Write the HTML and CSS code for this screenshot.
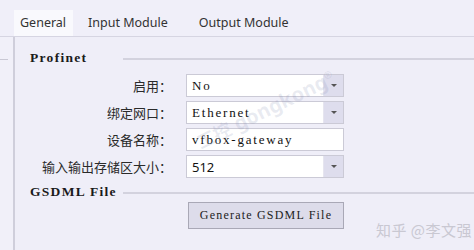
FILE: index.html
```html
<!DOCTYPE html>
<html>
<head>
<meta charset="utf-8">
<link rel="stylesheet" href="styles.css">
</head>
<body>
<div class="window">
  <div class="tabs">
    <div class="tab active">General</div>
    <div class="tab">Input Module</div>
    <div class="tab">Output Module</div>
  </div>
  <div class="main">
    <div class="gutter"><span class="tick"></span></div>
    <div class="panel">
      <div class="group-head"><span class="group-title">Profinet</span></div>
      <div class="form">
        <label class="lbl">启用：</label>
        <div class="field combo"><span class="val">No</span><span class="drop"><span class="arrow"></span></span></div>
        <label class="lbl">绑定网口：</label>
        <div class="field combo"><span class="val">Ethernet</span><span class="drop"><span class="arrow"></span></span></div>
        <label class="lbl">设备名称：</label>
        <div class="field"><span class="val">vfbox-gateway</span></div>
        <label class="lbl">输入输出存储区大小：</label>
        <div class="field combo"><span class="val sans">512</span><span class="drop"><span class="arrow"></span></span></div>
      </div>
      <div class="group-head gsd"><span class="group-title">GSDML File</span></div>
      <div class="btn-row">
        <button class="btn">Generate GSDML File</button>
      </div>
    </div>
  </div>
  <div class="wm-logo"><span class="wm-cn">工控</span> gongkong<sup>®</sup></div>
  <div class="wm-zhihu">知乎 @李文强</div>
</div>
</body>
</html>
```

FILE: styles.css
```css
* { box-sizing: border-box; }
html, body {
  margin: 0;
  padding: 0;
  width: 474px;
  height: 250px;
  overflow: hidden;
  background: #efeef8;
}
.window {
  position: relative;
  width: 474px;
  height: 250px;
  display: flex;
  flex-direction: column;
  font-family: "Noto Sans", "Noto Sans CJK SC", sans-serif;
  color: #333;
}
.tabs {
  height: 37px;
  display: flex;
  align-items: flex-end;
  padding-left: 14px;
  background: #f0eff9;
  border-bottom: 1px solid #d6d5e2;
}
.tab {
  height: 26px;
  padding: 0 11px 0 6px;
  font-size: 12.5px;
  line-height: 25px;
  color: #333;
  margin-right: 14px;
}
.tab.active {
  background: #f9f9fd;
  padding: 0 7px 0 6px;
  margin-right: 9px;
}
.main {
  flex: 1;
  display: flex;
}
.gutter {
  width: 15px;
  border-right: 2px solid #cfcedb;
  background: #f1f0f9;
  padding-top: 22px;
}
.tick {
  display: block;
  width: 8px;
  height: 1px;
  background: #c9c8d4;
}
.panel {
  flex: 1;
  padding-left: 15px;
  display: flex;
  flex-direction: column;
}
.group-head {
  display: flex;
  align-items: center;
  height: 14px;
  margin-top: 14px;
}
.group-head::after {
  content: "";
  flex: 1;
  height: 2px;
  background: #d3d2de;
  margin-top: 2px;
}
.group-title {
  font-family: "Liberation Serif", "DejaVu Serif", serif;
  font-weight: bold;
  font-size: 13.5px;
  letter-spacing: 1.3px;
  color: #1a1a1a;
  min-width: 89px;
  margin-right: 4px;
}
.gsd { margin-top: 7px; }
.form {
  display: grid;
  grid-template-columns: 142px 158px;
  column-gap: 14px;
  row-gap: 4px;
  margin-top: 9px;
  align-items: center;
}
.lbl {
  font-family: "Noto Sans CJK SC", sans-serif;
  font-size: 13px;
  text-align: right;
  color: #2a2a2a;
  line-height: 23px;
  white-space: nowrap;
}
.field {
  height: 23px;
  background: #fff;
  border: 1px solid #cbcad6;
  display: flex;
  align-items: center;
  padding-left: 5px;
}
.val {
  flex: 1;
  font-family: "Liberation Serif", "DejaVu Serif", serif;
  font-size: 13px;
  letter-spacing: 1.8px;
  color: #111;
}
.val.sans {
  font-family: "Noto Sans", sans-serif;
  font-size: 13px;
  letter-spacing: 0;
}
.drop {
  width: 20px;
  height: 21px;
  background: #dedded;
  border-left: 1px solid #e6e5ef;
  display: flex;
  align-items: center;
  justify-content: center;
}
.arrow {
  width: 0;
  height: 0;
  border-left: 3px solid transparent;
  border-right: 3px solid transparent;
  border-top: 3px solid #555;
}
.btn-row {
  display: flex;
  padding-left: 158px;
  margin-top: 3px;
}
.btn {
  width: 156px;
  height: 27px;
  background: #dddcea;
  border: 1px solid #a9a8b6;
  font-family: "Liberation Serif", "DejaVu Serif", serif;
  font-size: 12px;
  letter-spacing: 1.2px;
  color: #222;
  padding: 0;
}
.wm-zhihu {
  position: absolute;
  left: 376px;
  top: 219px;
  font-family: "Noto Sans CJK SC", sans-serif;
  font-size: 15px;
  color: #c9c8d2;
  letter-spacing: 0.5px;
}
.wm-logo {
  position: absolute;
  left: 190px;
  top: 96px;
  font-family: "Noto Sans", sans-serif;
  font-size: 20px;
  font-weight: bold;
  color: rgba(120, 130, 170, 0.16);
  transform: rotate(-26deg);
  white-space: nowrap;
}
.wm-cn {
  font-family: "Noto Sans CJK SC", sans-serif;
  font-size: 18px;
}
.wm-logo sup { font-size: 10px; }
```
